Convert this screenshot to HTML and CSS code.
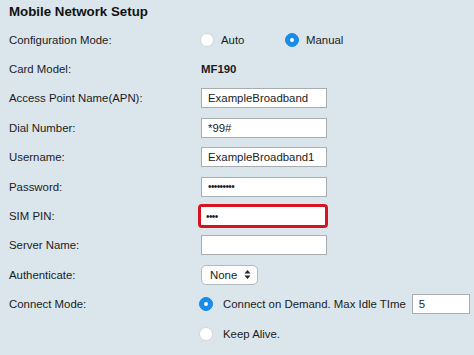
FILE: index.html
```html
<!DOCTYPE html>
<html lang="en">
<head>
  <meta charset="UTF-8" />
  <title>Mobile Network Setup</title>
  <link rel="stylesheet" href="styles.css">
</head>
<body>
  <div class="panel">
    <h2 class="title">Mobile Network Setup</h2>

    <div class="form-grid">
      <label>Configuration Mode:</label>
      <div class="value radios">
        <span class="radio"></span><span class="radio-text">Auto</span>
        <span class="radio checked"></span><span class="radio-text">Manual</span>
      </div>

      <label>Card Model:</label>
      <div class="value"><strong class="model">MF190</strong></div>

      <label>Access Point Name(APN):</label>
      <div class="value"><input class="field" type="text" value="ExampleBroadband"></div>

      <label>Dial Number:</label>
      <div class="value"><input class="field" type="text" value="*99#"></div>

      <label>Username:</label>
      <div class="value"><input class="field" type="text" value="ExampleBroadband1"></div>

      <label>Password:</label>
      <div class="value"><input class="field dots" type="text" value="•••••••••"></div>

      <label>SIM PIN:</label>
      <div class="value"><span class="highlight"><input class="field dots" type="text" value="••••"></span></div>

      <label>Server Name:</label>
      <div class="value"><input class="field" type="text" value=""></div>

      <label>Authenticate:</label>
      <div class="value">
        <span class="select">None
          <svg width="7" height="11" viewBox="0 0 7 11"><path d="M0.5 4.5 L3.5 1 L6.5 4.5 Z M0.5 6.5 L3.5 10 L6.5 6.5 Z" fill="#222"/></svg>
        </span>
      </div>

      <label>Connect Mode:</label>
      <div class="value connect">
        <span class="radio checked"></span><span class="radio-text">Connect on Demand. Max Idle TIme</span>
        <input class="field idle" type="text" value="5">
      </div>

      <label></label>
      <div class="value connect">
        <span class="radio"></span><span class="radio-text">Keep Alive.</span>
      </div>
    </div>
  </div>
</body>
</html>
```

FILE: styles.css
```css
* {
  margin: 0;
  padding: 0;
  box-sizing: border-box;
  font-family: 'Liberation Sans', Arial, sans-serif;
}

body {
  background-color: #dae5ec;
  color: #1c1c1c;
  font-size: 11.4px;
}

.panel {
  width: 474px;
  height: 355px;
  padding-left: 9px;
  overflow: hidden;
}

.title {
  font-size: 13.3px;
  font-weight: bold;
  height: 25px;
  line-height: 24px;
  color: #111;
}

.form-grid {
  display: grid;
  grid-template-columns: 191px 1fr;
  grid-auto-rows: 29.4px;
  align-items: center;
}

label {
  display: block;
}

.value {
  display: flex;
  align-items: center;
}

.radio {
  width: 14px;
  height: 14px;
  border-radius: 50%;
  background-color: #fff;
  border: 1px solid #d3d7da;
  display: flex;
  align-items: center;
  justify-content: center;
  flex-shrink: 0;
}

.radio.checked {
  background-color: #1a8be6;
  border-color: #1a8be6;
}

.radio.checked::after {
  content: "";
  width: 4px;
  height: 4px;
  border-radius: 50%;
  background-color: #fff;
}

.radios .radio-text {
  margin-left: 7px;
  width: 64px;
}

.connect .radio {
  margin-left: -1px;
}

.connect .radio-text {
  margin-left: 10px;
  white-space: nowrap;
}

.model {
  font-weight: bold;
  margin-left: 1px;
}

.field {
  width: 126px;
  height: 20px;
  border: 1px solid #a7adb1;
  background-color: #fff;
  padding-left: 6px;
  font-size: 11.4px;
  color: #1c1c1c;
  margin-left: 1px;
  outline: none;
}

.dots {
  font-size: 10px;
  letter-spacing: -0.6px;
}

.highlight {
  display: inline-flex;
  border: 3px solid #d9121f;
  border-radius: 4px;
  margin-left: -2px;
}

.highlight .field {
  border: none;
  width: 124px;
  height: 18px;
  margin-left: 0;
  padding-left: 5px;
}

.select {
  display: inline-flex;
  align-items: center;
  gap: 7px;
  height: 20px;
  padding: 0 6px 0 8px;
  margin-left: 1px;
  background-color: #fdfdfd;
  border: 1px solid #b4b9bc;
  border-radius: 5px;
}

.idle {
  width: 58px;
  margin-left: 6px;
}
```
